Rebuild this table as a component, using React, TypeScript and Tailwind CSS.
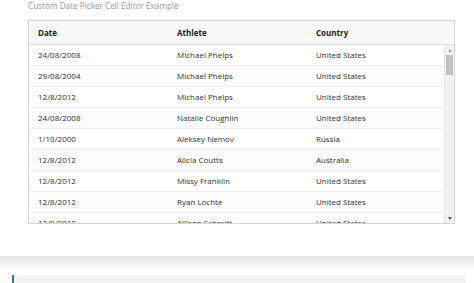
const rows = [
  ['24/08/2008', 'Michael Phelps', 'United States'],
  ['29/08/2004', 'Michael Phelps', 'United States'],
  ['12/8/2012', 'Michael Phelps', 'United States'],
  ['24/08/2008', 'Natalie Coughlin', 'United States'],
  ['1/10/2000', 'Aleksey Nemov', 'Russia'],
  ['12/8/2012', 'Alicia Coutts', 'Australia'],
  ['12/8/2012', 'Missy Franklin', 'United States'],
  ['12/8/2012', 'Ryan Lochte', 'United States'],
  ['12/8/2012', 'Allison Schmitt', 'United States'],
]

export default function App() {
  return (
    <div className="w-[474px] h-[283px] overflow-hidden bg-white text-[#333]" style={{ fontFamily: '"Open Sans", "Noto Sans", sans-serif' }}>
      <div className="h-[256px] pl-[28px] pr-[19px]">
        <div className="h-[20px] pt-[0px] text-[8.2px] leading-[11px] text-[#9a9a9a]">Custom Date Picker Cell Editor Example</div>
        <div className="h-[204px] border border-[#d6d6d6] flex flex-col overflow-hidden">
          <div className="h-[24px] shrink-0 flex items-center bg-[#f8f8f8] border-b border-[#dedede] text-[8px] font-bold text-[#222]">
            <div className="w-[139px] pl-[9px]">Date</div>
            <div className="w-[139px] pl-[9px]">Athlete</div>
            <div className="flex-1 pl-[9px]">Country</div>
          </div>
          <div className="flex flex-1 overflow-hidden">
            <div className="flex-1 overflow-hidden">
              {rows.map((r, i) => (
                <div key={i} className={`h-[21px] shrink-0 flex items-center border-b border-[#eeeeee] text-[8px] text-[#333] ${i % 2 ? 'bg-[#fcfcfc]' : 'bg-white'}`}>
                  <div className="w-[139px] pl-[9px]">{r[0]}</div>
                  <div className="w-[139px] pl-[9px]">{r[1]}</div>
                  <div className="flex-1 pl-[9px]">{r[2]}</div>
                </div>
              ))}
            </div>
            <div className="w-[10px] bg-[#f1f1f1] border-l border-[#e6e6e6] flex flex-col items-center">
              <div className="h-[10px] flex items-center justify-center">
                <div className="w-0 h-0 border-l-[2.5px] border-r-[2.5px] border-b-[3px] border-l-transparent border-r-transparent border-b-[#a3a3a3]" />
              </div>
              <div className="w-[7px] h-[20px] bg-[#c1c1c1]" />
              <div className="flex-1" />
              <div className="h-[10px] flex items-center justify-center">
                <div className="w-0 h-0 border-l-[2.5px] border-r-[2.5px] border-t-[3px] border-l-transparent border-r-transparent border-t-[#505050]" />
              </div>
            </div>
          </div>
        </div>
      </div>
      <div className="h-[14px] bg-gradient-to-b from-[#e4e4e4] to-white" />
      <div className="pl-[12px] pr-[8px] pt-[5px]">
        <div className="h-[12px] bg-[#f2f2f2] border-l-2 border-[#3f6f9f]" />
      </div>
    </div>
  )
}
